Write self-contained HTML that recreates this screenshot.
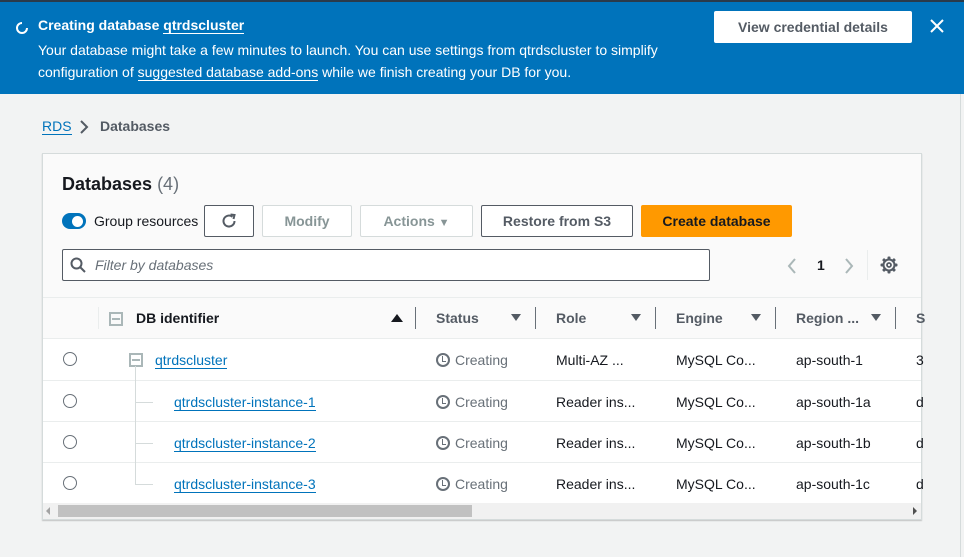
<!DOCTYPE html>
<html><head><meta charset="utf-8"><style>
*{box-sizing:border-box;margin:0;padding:0}
body{width:964px;height:557px;overflow:hidden;background:#f2f3f3;font-family:"Liberation Sans",sans-serif;font-size:14px;color:#16191f;position:relative}
.a{position:absolute}
.banner{left:0;top:0;width:964px;height:94px;background:#0073bb;border-top:2px solid #2a3a4a;color:#fff}
.u{border-bottom:1px solid currentColor}
.btn{position:absolute;height:32px;border:1px solid #545b64;border-radius:2px;background:#fff;font-weight:bold;color:#545b64;text-align:center;line-height:30px;font-size:14px}
.dis{border-color:#d5dbdb;color:#879596;background:#fff}
.lnk{color:#0073bb;border-bottom:1px solid #0073bb}
.row{position:absolute;left:43px;width:878px;height:41px;background:#fff;border-top:1px solid #eaeded}
.row span{position:absolute;top:13px}
.gr{color:#687078}
.rad{position:absolute;left:20px;top:13px;width:14px;height:14px;border:1px solid #687078;border-radius:50%}
.clk{display:inline-block;width:14px;height:14px;border:2px solid #687078;border-radius:50%;vertical-align:-2px;margin-right:5px;position:relative}
.clk:after{content:"";position:absolute;left:4px;top:1px;width:3px;height:5px;border-left:1.5px solid #687078;border-bottom:1.5px solid #687078}
.hd{position:absolute;top:12px;font-weight:bold;color:#545b64}
.sep{position:absolute;top:9px;width:1px;height:22px;background:#687078}
.tri{position:absolute;top:16px;width:0;height:0;border-left:5px solid transparent;border-right:5px solid transparent;border-top:7px solid #545b64}
</style></head><body>
<div class="a banner">
 <svg class="a" style="left:15px;top:19px" width="14" height="14" viewBox="0 0 14 14"><path d="M7 2 A5 5 0 1 0 12 7" fill="none" stroke="#fff" stroke-width="2"/></svg>
 <div class="a" style="left:38px;top:15px;font-weight:bold;font-size:14px"><span>Creating database </span><span class="u">qtrdscluster</span></div>
 <div class="a" style="left:38px;top:37px;line-height:22px;font-size:14px">Your database might take a few minutes to launch. You can use settings from qtrdscluster to simplify<br>configuration of <span class="u">suggested database add-ons</span> while we finish creating your DB for you.</div>
 <div class="a" style="left:714px;top:9px;width:198px;height:32px;background:#fff;color:#545b64;border-radius:2px;font-weight:bold;text-align:center;line-height:32px">View credential details</div>
 <svg class="a" style="left:929px;top:16px" width="16" height="16"><path d="M2 2L14 14M14 2L2 14" stroke="#fff" stroke-width="2"/></svg>
</div>
<div class="a" style="left:960px;top:94px;width:1px;height:463px;background:#d5dbdb"></div>
<div class="a" style="left:42px;top:118px"><span class="lnk">RDS</span></div>
<svg class="a" style="left:79px;top:120px" width="10" height="14"><path d="M2 1L8 7L2 13" fill="none" stroke="#545b64" stroke-width="2"/></svg>
<div class="a" style="left:100px;top:118px;font-weight:bold;color:#545b64">Databases</div>
<div class="a" style="left:42px;top:153px;width:880px;height:367px;background:#fafafa;border:1px solid #d5dbdb;box-shadow:0 1px 1px rgba(0,0,0,.2)"></div>
<div class="a" style="left:62px;top:174px;font-size:18px;font-weight:bold">Databases <span style="font-weight:normal;color:#687078">(4)</span></div>
<div class="a" style="left:62px;top:213px;width:24px;height:16px;border-radius:8px;background:#0073bb"></div>
<div class="a" style="left:72px;top:216px;width:11px;height:11px;border-radius:50%;background:#fff"></div>
<div class="a" style="left:94px;top:213px">Group resources</div>
<div class="btn" style="left:204px;top:205px;width:50px"><svg width="18" height="18" viewBox="0 0 18 18" style="vertical-align:-4px"><path d="M14.5 9A5.5 5.5 0 1 1 12.5 4.8" fill="none" stroke="#545b64" stroke-width="2"/><path d="M10.5 2.5L14.5 3L13.5 7" fill="none" stroke="#545b64" stroke-width="2"/></svg></div>
<div class="btn dis" style="left:262px;top:205px;width:90px">Modify</div>
<div class="btn dis" style="left:360px;top:205px;width:113px">Actions <span style="font-size:11px">▼</span></div>
<div class="btn" style="left:481px;top:205px;width:152px">Restore from S3</div>
<div class="btn" style="left:641px;top:205px;width:151px;background:#ff9900;border-color:#ff9900;color:#16191f">Create database</div>
<div class="a" style="left:62px;top:249px;width:648px;height:32px;border:1px solid #545b64;border-radius:2px;background:#fff"></div>
<svg class="a" style="left:70px;top:257px" width="16" height="16"><circle cx="6.5" cy="6.5" r="5" fill="none" stroke="#545b64" stroke-width="2"/><path d="M10 10L15 15" stroke="#545b64" stroke-width="2"/></svg>
<div class="a" style="left:95px;top:257px;font-style:italic;color:#687078">Filter by databases</div>
<svg class="a" style="left:787px;top:258px" width="10" height="16"><path d="M8 1L2 8L8 15" fill="none" stroke="#aab7b8" stroke-width="2"/></svg>
<div class="a" style="left:817px;top:257px;font-weight:bold">1</div>
<svg class="a" style="left:844px;top:258px" width="10" height="16"><path d="M2 1L8 8L2 15" fill="none" stroke="#aab7b8" stroke-width="2"/></svg>
<div class="a" style="left:867px;top:250px;width:1px;height:30px;background:#eaeded"></div>
<svg class="a" style="left:879px;top:255px" width="20" height="20" viewBox="0 0 20 20"><g fill="#545b64"><rect x="8.5" y="1.5" width="3" height="4" rx="1"/><rect x="8.5" y="14.5" width="3" height="4" rx="1"/><rect x="1.5" y="8.5" width="4" height="3" rx="1"/><rect x="14.5" y="8.5" width="4" height="3" rx="1"/><g transform="rotate(45 10 10)"><rect x="8.5" y="1.5" width="3" height="4" rx="1"/><rect x="8.5" y="14.5" width="3" height="4" rx="1"/><rect x="1.5" y="8.5" width="4" height="3" rx="1"/><rect x="14.5" y="8.5" width="4" height="3" rx="1"/></g></g><circle cx="10" cy="10" r="5.5" fill="none" stroke="#545b64" stroke-width="2"/><circle cx="10" cy="10" r="2" fill="none" stroke="#545b64" stroke-width="1.8"/></svg>
<div class="row" style="top:297px;height:41px;background:#fafafa">
 <div class="a" style="left:55px;top:9px;width:1px;height:22px;background:#eaeded"></div>
 <div class="a" style="left:66px;top:14px;width:14px;height:14px;border:2px solid #aab7b8"></div><div class="a" style="left:69px;top:20px;width:8px;height:2px;background:#aab7b8"></div>
 <div class="hd" style="left:93px;color:#16191f">DB identifier</div>
 <div class="a" style="left:348px;top:16px;border-left:6px solid transparent;border-right:6px solid transparent;border-bottom:8px solid #16191f"></div>
 <div class="sep" style="left:372px"></div>
 <div class="hd" style="left:393px">Status</div><div class="tri" style="left:468px"></div>
 <div class="sep" style="left:492px"></div>
 <div class="hd" style="left:513px">Role</div><div class="tri" style="left:588px"></div>
 <div class="sep" style="left:612px"></div>
 <div class="hd" style="left:633px">Engine</div><div class="tri" style="left:708px"></div>
 <div class="sep" style="left:732px"></div>
 <div class="hd" style="left:753px">Region ...</div><div class="tri" style="left:828px"></div>
 <div class="sep" style="left:852px"></div>
 <div class="hd" style="left:873px">S</div>
</div>
<div class="row" style="top:338px;height:42px">
 <div class="rad"></div>
 <div class="a" style="left:86px;top:14px;width:14px;height:14px;border:2px solid #aab7b8"></div><div class="a" style="left:89px;top:20px;width:8px;height:2px;background:#aab7b8"></div>
 <span style="left:112px" class="lnk">qtrdscluster</span>
 <span style="left:393px" class="gr"><i class="clk"></i>Creating</span>
 <span style="left:513px">Multi-AZ ...</span><span style="left:633px">MySQL Co...</span><span style="left:753px">ap-south-1</span><span style="left:873px">3</span>
</div>
<div class="row" style="top:380px"><div class="rad"></div><div class="a" style="left:92px;top:21px;width:18px;height:1px;background:#d5dbdb"></div>
 <span style="left:131px" class="lnk">qtrdscluster-instance-1</span><span style="left:393px" class="gr"><i class="clk"></i>Creating</span><span style="left:513px">Reader ins...</span><span style="left:633px">MySQL Co...</span><span style="left:753px">ap-south-1a</span><span style="left:873px">d</span></div>
<div class="row" style="top:421px"><div class="rad"></div><div class="a" style="left:92px;top:21px;width:18px;height:1px;background:#d5dbdb"></div>
 <span style="left:131px" class="lnk">qtrdscluster-instance-2</span><span style="left:393px" class="gr"><i class="clk"></i>Creating</span><span style="left:513px">Reader ins...</span><span style="left:633px">MySQL Co...</span><span style="left:753px">ap-south-1b</span><span style="left:873px">d</span></div>
<div class="row" style="top:462px"><div class="rad"></div><div class="a" style="left:92px;top:21px;width:18px;height:1px;background:#d5dbdb"></div>
 <span style="left:131px" class="lnk">qtrdscluster-instance-3</span><span style="left:393px" class="gr"><i class="clk"></i>Creating</span><span style="left:513px">Reader ins...</span><span style="left:633px">MySQL Co...</span><span style="left:753px">ap-south-1c</span><span style="left:873px">d</span></div>
<div class="a" style="left:135px;top:366px;width:1px;height:118px;background:#d5dbdb"></div>
<div class="a" style="left:43px;top:503px;width:878px;height:16px;background:#f1f1f1"></div>
<div class="a" style="left:58px;top:505px;width:414px;height:12px;background:#c1c1c1"></div>
<div class="a" style="left:46px;top:507px;border-top:4px solid transparent;border-bottom:4px solid transparent;border-right:4px solid #a3a3a3"></div>
<div class="a" style="left:913px;top:507px;border-top:4px solid transparent;border-bottom:4px solid transparent;border-left:4px solid #505050"></div>
</body></html>
